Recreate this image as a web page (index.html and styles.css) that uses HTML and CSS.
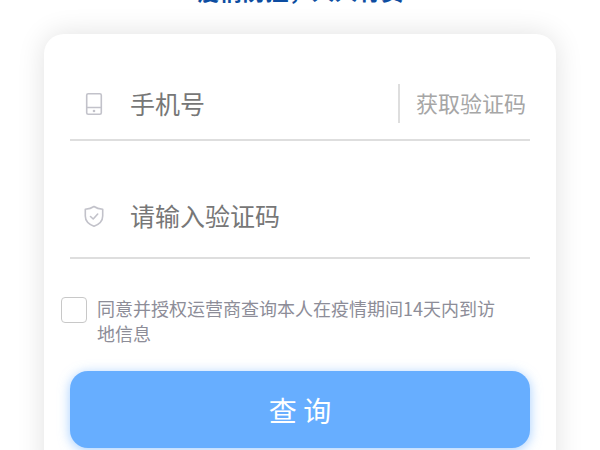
FILE: index.html
```
<!DOCTYPE html>
<html lang="zh-CN">
<head>
  <meta charset="UTF-8">
  <title>疫情防控，人人有责</title>
  <meta name="viewport" content="width=device-width, initial-scale=1">
  <link rel="stylesheet" href="styles.css">
</head>
<body>

<h1 class="slogan">疫情防控，人人有责</h1>

<form class="card">
  <div class="field">
    <label for="phone" aria-label="手机号">
      <svg class="icon" viewBox="0 0 24 24">
        <rect x="4.700" y="1.700" width="14.600" height="20.600" rx="1.500"/>
        <path d="M5 15.500h14"/>
        <circle class="dot" cx="12" cy="19" r="1.300"/>
      </svg>
    </label>
    <input type="tel" id="phone" name="phone" placeholder="手机号">
    <button type="button" class="get-code">获取验证码</button>
  </div>

  <div class="field field-code">
    <label for="code" aria-label="验证码">
      <svg class="icon" viewBox="0 0 24 24">
        <path d="M12 2.500C9.500 4.300 6.500 5 3.300 5.200V12c0 5 3.500 8.300 8.700 10.300 5.200-2 8.700-5.300 8.700-10.300V5.200C17.500 5 14.500 4.300 12 2.500z"/>
        <path d="M8.500 12.500l2.700 2.500 4.500-5"/>
      </svg>
    </label>
    <input type="text" id="code" name="code" placeholder="请输入验证码">
  </div>

  <div class="agree">
    <input type="checkbox" id="agree" name="agree">
    <label for="agree">同意并授权运营商查询本人在疫情期间14天内到访地信息</label>
  </div>

  <button type="submit" class="submit">查 询</button>
</form>

</body>
</html>
```

FILE: styles.css
```
* { box-sizing: border-box; }
body { margin: 0; padding: 0 44px; background: #fff; font-family: "Noto Sans CJK SC", sans-serif; overflow: hidden; }
input, button { font-family: inherit; }

/* slogan sits half above the top edge */
.slogan { margin: -25px 0 29px; font-size: 23px; line-height: 30px; font-weight: 700; text-align: center; color: #0d4da1; }

.card { padding: 34px 26px 40px; background: #fff; border-radius: 20px; box-shadow: 0 0 28px rgba(0, 0, 0, 0.12); }

.field { display: flex; align-items: center; height: 73px; padding: 0 4px 0 12px; border-bottom: 2px solid #dedede; }
.field-code { height: 84px; margin-top: 34px; }
.field label { display: flex; margin-right: 24px; }
.field input { flex: 1; min-width: 0; height: 40px; padding: 0 0 2px; border: none; outline: none; background: none; font-size: 25px; color: #333; }
.field input::placeholder { color: #777; opacity: 1; }
.icon { width: 24px; height: 24px; fill: none; stroke: #c2c2ca; stroke-width: 1.6; stroke-linecap: round; stroke-linejoin: round; }
.icon .dot { fill: #c2c2ca; stroke: none; }
.get-code { height: 39px; padding: 0 0 2px 16px; border: none; border-left: 2px solid #dedede; background: none; font-size: 22px; line-height: 37px; color: #a6a6a6; cursor: pointer; }

.agree { display: flex; align-items: flex-start; margin: 37px 20px 0 -9px; }
.agree input { appearance: none; flex: none; width: 26px; height: 26px; margin: 1px 10px 0 0; border: 1px solid #c8c8c8; border-radius: 4px; background: #fff; }
.agree input:checked { background: #67aeff; border-color: #67aeff; }
.agree label { font-size: 18px; line-height: 25px; color: #8d8d98; }

.submit { display: block; width: 100%; height: 77px; margin-top: 25px; border: none; border-radius: 18px; background: #67aeff; box-shadow: 0 2px 12px rgba(103, 174, 255, 0.6); font-size: 28px; color: #fff; cursor: pointer; }
```
